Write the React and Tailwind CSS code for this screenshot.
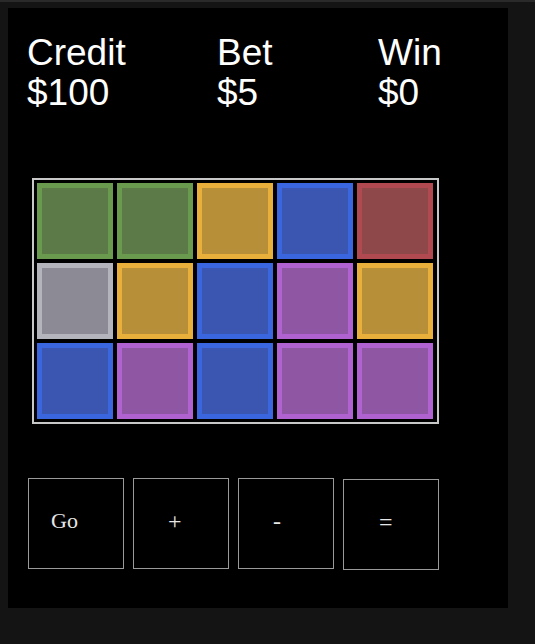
const colors = {
  green: 'border-[#6a9a4e] bg-[#5b7a48]',
  yellow: 'border-[#e8b03a] bg-[#b68f38]',
  blue: 'border-[#3a66e0] bg-[#3a56b0]',
  red: 'border-[#b04a50] bg-[#8f484a]',
  gray: 'border-[#b4b4bc] bg-[#8c8a94]',
  purple: 'border-[#b062d0] bg-[#8f56a4]',
};

const reels = [
  ['green', 'green', 'yellow', 'blue', 'red'],
  ['gray', 'yellow', 'blue', 'purple', 'yellow'],
  ['blue', 'purple', 'blue', 'purple', 'purple'],
];

const Stat = ({ label, value, className = '' }) => (
  <div className={`text-[37px] leading-[40px] text-white ${className}`}>
    <div>{label}</div>
    <div>{value}</div>
  </div>
);

const App = () => {
  return (
    <div className="min-h-[644px] w-[535px] bg-[#141414] font-['Liberation_Sans',Arial,sans-serif]">
      <div className="h-[2px] bg-[#2a2a2a]" />
      <div className="pl-2 pt-[6px]">
        <div className="flex h-[600px] w-[500px] flex-col bg-black pl-[19px] pt-[25px]">
          {/* stats */}
          <div className="flex">
            <Stat label="Credit" value="$100" className="w-[190px]" />
            <Stat label="Bet" value="$5" className="w-[161px]" />
            <Stat label="Win" value="$0" />
          </div>

          {/* reels */}
          <div className="ml-[5px] mt-[65px] grid w-[407px] grid-cols-5 gap-[4px] border-2 border-[#c8c8c8] p-[3px] pr-[4px]">
            {reels.flat().map((c, i) => (
              <div key={i} className={`h-[76px] w-[76px] border-[5px] ${colors[c]}`} />
            ))}
          </div>

          {/* controls */}
          <div className="ml-px mt-[54px] flex items-start gap-[9px] font-['Liberation_Serif','Times_New_Roman',serif] text-[22px] text-[#e6e6e6]">
            <button className="flex h-[91px] w-[96px] items-center border border-[#9a9a9a] pb-[6px] pl-[22px]">Go</button>
            <button className="flex h-[91px] w-[96px] items-center border border-[#9a9a9a] pb-[6px] pl-[34px] text-[24px]">+</button>
            <button className="flex h-[91px] w-[96px] items-center border border-[#9a9a9a] pb-[6px] pl-[34px] text-[24px]">-</button>
            <button className="mt-px flex h-[91px] w-[96px] items-center border border-[#9a9a9a] pb-[6px] pl-[35px] text-[24px]">=</button>
          </div>
        </div>
      </div>
    </div>
  );
};

export default App;
